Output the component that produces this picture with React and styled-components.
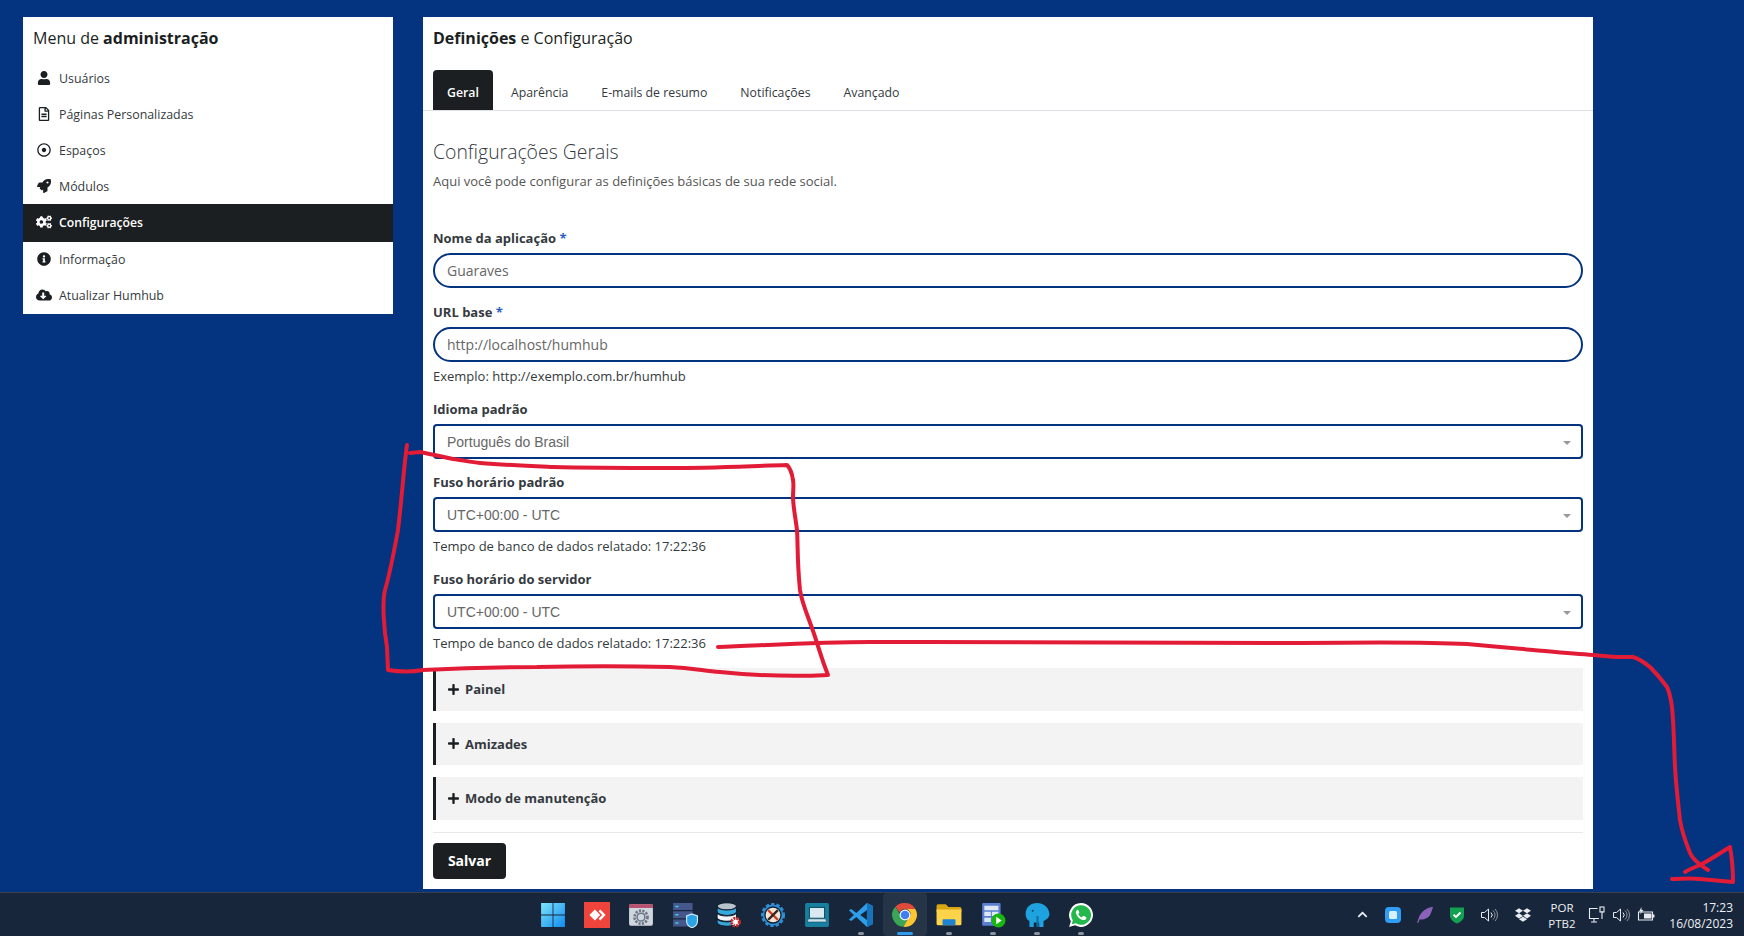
import React from 'react'
import styled, { createGlobalStyle } from 'styled-components'
import {
  FaUser,
  FaRegFileAlt,
  FaRegDotCircle,
  FaRocket,
  FaCogs,
  FaInfoCircle,
  FaCloudDownloadAlt,
  FaPlus,
  FaDropbox,
  FaChevronUp,
} from 'react-icons/fa'

const navy = '#04337f'
const ink = '#1b1f22'
const text = '#343a40'
const sans = '"Open Sans", "Noto Sans", sans-serif'

const GlobalStyle = createGlobalStyle`
  html, body {
    margin: 0;
    height: 100%;
    overflow: hidden;
    background: ${navy};
  }
  * { box-sizing: border-box; }
`

const Page = styled.div`
  position: relative;
  display: flex;
  flex-direction: column;
  width: 1744px;
  height: 936px;
  font-family: ${sans};
  color: ${text};
`

const Content = styled.main`
  flex: 1;
  display: flex;
  align-items: flex-start;
  gap: 30px;
  padding: 17px 0 0 23px;
`

const Sidebar = styled.nav`
  width: 370px;
  height: 297px;
  background: #fff;
`

const PanelTitle = styled.h1`
  margin: 0;
  font-size: 16px;
  font-weight: 400;
  line-height: 23px;
  color: ${ink};
  padding: ${p => (p.$side ? '10px 10px 10px' : '10px 0 0')};

  strong {
    font-weight: 700;
  }
`

const NavItem = styled.a`
  display: flex;
  align-items: center;
  height: ${p => (p.$active ? '38px' : '36px')};
  padding-left: 13px;
  padding-bottom: ${p => (p.$raised ? '2px' : '0')};
  font-size: ${p => (p.$active ? '12.2px' : '12.4px')};
  font-weight: ${p => (p.$active ? 600 : 400)};
  color: ${p => (p.$active ? '#fff' : text)};
  background: ${p => (p.$active ? ink : 'transparent')};

  svg {
    flex: none;
    width: 16px;
    font-size: 14px;
    color: ${p => (p.$active ? '#fff' : ink)};
    margin-right: 7px;
  }
`

const Main = styled.section`
  width: 1170px;
  height: 872px;
  padding: 0 10px;
  background: #fff;
`

const Tabs = styled.div`
  display: flex;
  gap: 3px;
  height: 41px;
  margin: 20px -10px 0;
  padding: 0 10px;
  border-bottom: 1px solid #dee2e6;
`

const Tab = styled.a`
  display: flex;
  align-items: center;
  height: 40px;
  padding: ${p => (p.$active ? '4px 14px 0' : '4px 15px 0')};
  border-radius: 4px 4px 0 0;
  font-size: 12.3px;
  font-weight: ${p => (p.$active ? 600 : 500)};
  color: ${p => (p.$active ? '#fff' : text)};
  background: ${p => (p.$active ? ink : 'transparent')};
`

const SectionTitle = styled.h2`
  margin: 27px 0 0;
  font-size: 19.4px;
  font-weight: 300;
  line-height: 28px;
  color: ${text};
`

const SectionText = styled.p`
  margin: 6px 0 39px;
  font-size: 13px;
  line-height: 18px;
  color: #555;
`

const Field = styled.div`
  margin-bottom: ${p => p.$gap || '15px'};
`

const Label = styled.label`
  display: block;
  height: 18px;
  margin-bottom: 6px;
  font-size: 13px;
  font-weight: 700;
  line-height: 18px;
  color: ${text};

  span {
    color: #2c5cc5;
  }
`

const Input = styled.input`
  display: block;
  width: 100%;
  height: 35px;
  padding: 0 12px;
  border: 2px solid ${navy};
  border-radius: 18px;
  outline: none;
  background: #fff;
  font-family: ${sans};
  font-size: 14px;
  color: #666;
`

const SelectWrap = styled.div`
  position: relative;

  &::after {
    content: '';
    position: absolute;
    top: 17px;
    right: 12px;
    border-left: 4px solid transparent;
    border-right: 4px solid transparent;
    border-top: 4px solid #999;
  }
`

const Select = styled.select`
  display: block;
  width: 100%;
  height: 35px;
  padding: 0 12px;
  border: 2px solid ${navy};
  border-radius: 4px;
  outline: none;
  appearance: none;
  background: #fff;
  font-family: "Liberation Sans", Arial, sans-serif;
  font-size: 14px;
  color: #666;
`

const Help = styled.div`
  margin-top: 5px;
  font-size: 13px;
  line-height: 18px;
  color: ${text};
`

const Accordion = styled.div`
  display: flex;
  align-items: center;
  height: 42.5px;
  margin-bottom: 12px;
  padding-left: 12px;
  border-left: 3px solid ${ink};
  background: #f3f3f3;
  font-size: 13px;
  font-weight: 700;
  color: ${text};

  svg {
    width: 11px;
    margin-right: 6px;
    color: ${ink};
  }
`

const Footer = styled.div`
  padding-top: 10px;
  border-top: 1px solid #e8e8e8;
`

const SaveButton = styled.button`
  width: 73px;
  height: 36px;
  border: none;
  border-radius: 4px;
  background: ${ink};
  font-family: ${sans};
  font-size: 14px;
  font-weight: 700;
  color: #fff;
`

const Taskbar = styled.footer`
  position: relative;
  flex: none;
  height: 44px;
  display: flex;
  align-items: center;
  background: #17263b;
  border-top: 1px solid #38414d;
`

const Pinned = styled.div`
  position: absolute;
  left: 531px;
  top: 0;
  display: flex;
  height: 100%;
`

const PinSlot = styled.div`
  position: relative;
  width: 44px;
  height: 100%;
  display: flex;
  align-items: center;
  justify-content: center;
  padding-top: 1px;
  border-radius: 4px;
  background: ${p => (p.$current ? '#263448' : 'transparent')};

  &::after {
    content: '';
    display: ${p => (p.$open || p.$current ? 'block' : 'none')};
    position: absolute;
    bottom: 1px;
    left: 50%;
    transform: translateX(-50%);
    width: ${p => (p.$current ? '16px' : '6px')};
    height: 3px;
    border-radius: 2px;
    background: ${p => (p.$current ? '#2f9bf0' : '#8b929c')};
  }
`

const Tray = styled.div`
  position: absolute;
  right: 11px;
  top: 0;
  height: 100%;
  display: flex;
  align-items: center;
  color: #e8ebef;
`

const TrayIcon = styled.div`
  width: ${p => p.$w || '32px'};
  display: flex;
  justify-content: center;
  align-items: center;
`

const TrayText = styled.div`
  padding-top: 2px;
  font-size: ${p => p.$size || '11.5px'};
  line-height: 16px;
  text-align: ${p => p.$align || 'center'};
  color: #eef0f3;
  width: ${p => p.$w};
`

const Annotation = styled.svg`
  position: absolute;
  left: 0;
  top: 0;
  width: 1744px;
  height: 936px;
  pointer-events: none;
  fill: none;
  stroke: #e21c36;
  stroke-width: 4;
  stroke-linecap: round;
  stroke-linejoin: round;
`

const Glyph = ({ children }) => (
  <svg width="26" height="26" viewBox="0 0 24 24">
    {children}
  </svg>
)

const WindowsLogo = () => (
  <Glyph>
    <defs>
      <linearGradient id="win" x1="0" y1="0" x2="1" y2="1">
        <stop offset="0" stopColor="#7fe3fb" />
        <stop offset="1" stopColor="#0f8cf0" />
      </linearGradient>
    </defs>
    <path fill="url(#win)" d="M1 1h10.6v10.6H1zM12.4 1H23v10.6H12.4zM1 12.4h10.6V23H1zM12.4 12.4H23V23H12.4z" />
  </Glyph>
)

const AnyDesk = () => (
  <Glyph>
    <rect width="24" height="24" fill="#ef443b" />
    <path fill="#fff" d="M10 7l5 5-5 5-5-5z" />
    <path fill="#fff" d="M15 7l5 5-5 5-1.6-1.6L16.8 12l-3.4-3.4z" />
  </Glyph>
)

const CalendarGear = () => (
  <Glyph>
    <rect x="1" y="2" width="22" height="20" rx="2" fill="#cfd6de" />
    <rect x="1" y="2" width="22" height="3.5" fill="#b8506f" />
    <circle cx="12" cy="14" r="6" fill="none" stroke="#6c7684" strokeWidth="2.4" strokeDasharray="2 1.2" />
    <circle cx="12" cy="14" r="3.6" fill="none" stroke="#6c7684" strokeWidth="1.4" />
  </Glyph>
)

const ServerShield = () => (
  <Glyph>
    <path fill="#46578c" d="M1 1h18v6.4H1zM1 8.6h18V15H1zM1 16.2h18v6.4H1z" />
    <path fill="#35d0e8" d="M3 3.5h3v1.4H3zM3 11h3v1.4H3zM3 18.7h3v1.4H3z" />
    <path fill="#2aa4e6" stroke="#d7eefb" strokeWidth="1" d="M18.5 11l5 1.8v5c0 3-2.4 5-5 6-2.6-1-5-3-5-6v-5z" />
  </Glyph>
)

const DatabaseGear = () => (
  <Glyph>
    <ellipse cx="10" cy="4" rx="9" ry="3.4" fill="#b6c2cc" stroke="#12202f" />
    <path fill="#35a9dc" stroke="#12202f" d="M1 4v5c0 1.9 4 3.4 9 3.4s9-1.5 9-3.4V4c0 1.9-4 3.4-9 3.4S1 5.9 1 4z" />
    <path fill="#f2f5f7" stroke="#12202f" d="M1 9.5v5c0 1.9 4 3.4 9 3.4s9-1.5 9-3.4v-5c0 1.9-4 3.4-9 3.4S1 11.4 1 9.5z" />
    <path fill="#35a9dc" stroke="#12202f" d="M1 15v4c0 1.9 4 3.4 9 3.4s9-1.5 9-3.4v-4c0 1.9-4 3.4-9 3.4S1 16.9 1 15z" />
    <circle cx="18" cy="18.5" r="3.6" fill="#fff" stroke="#c42b2b" strokeWidth="2.8" strokeDasharray="2 .9" />
  </Glyph>
)

const WrenchGear = () => (
  <Glyph>
    <circle cx="12" cy="12" r="9.6" fill="#2f8fd6" stroke="#2f8fd6" strokeWidth="3" strokeDasharray="3 1.8" />
    <circle cx="12" cy="12" r="8" fill="#12202f" />
    <circle cx="12" cy="12" r="6.8" fill="#f1e6d5" />
    <path stroke="#c9432e" strokeWidth="2.2" d="M7.5 7.5l9 9" />
    <path stroke="#33281f" strokeWidth="2.2" d="M16.5 7.5l-9 9" />
  </Glyph>
)

const Monitor = () => (
  <Glyph>
    <rect x="1" y="1" width="22" height="22" rx="1.5" fill="#17809f" />
    <rect x="5" y="5" width="14" height="10" fill="#d9e9ef" stroke="#0c4f66" />
    <path fill="#cfe3ea" stroke="#0c4f66" strokeWidth=".6" d="M4 15.5h16l1 3H3z" />
  </Glyph>
)

const VsCode = () => (
  <Glyph>
    <path fill="#2d9ee8" d="M17.5 1L23 3.7v16.6L17.5 23 7.7 13.9 3 17.5.8 16.4 5.5 12 .8 7.6 3 6.5l4.700 3.600zm0 6.400L11.300 12l6.200 4.600z" />
    <path fill="#1673b8" d="M17.5 1L23 3.7v16.6L17.5 23z" />
  </Glyph>
)

const Chrome = () => (
  <Glyph>
    <path fill="#e04a3b" d="M12 1a11 11 0 0 1 9.530 5.500H12a5.500 5.500 0 0 0-5.030 3.280L3.200 4.300A11 11 0 0 1 12 1z" />
    <path fill="#3aa655" d="M3.200 4.300l4.770 8.270a5.500 5.500 0 0 0 6.400 4.400L10.600 22.900A11 11 0 0 1 3.200 4.300z" />
    <path fill="#fbc62f" d="M21.530 6.500A11 11 0 0 1 10.600 22.900l4.770-8.270A5.500 5.500 0 0 0 16.800 9.300 5.500 5.500 0 0 0 12 6.500z" />
    <circle cx="12" cy="12" r="5" fill="#fff" />
    <circle cx="12" cy="12" r="4" fill="#3f7ff0" />
  </Glyph>
)

const Folder = () => (
  <Glyph>
    <path fill="#d9a514" d="M.5 3.500A1.500 1.500 0 0 1 2 2h7l2.500 2.500H22a1.500 1.500 0 0 1 1.500 1.500v3H.5z" />
    <path fill="#fcd349" d="M.5 7h23v13a1.500 1.500 0 0 1-1.500 1.500H2A1.500 1.500 0 0 1 .5 20z" />
    <rect x="6" y="16" width="12" height="5.5" rx="1" fill="#1e83d2" />
  </Glyph>
)

const TablePlay = () => (
  <Glyph>
    <rect x="2" y="1" width="17" height="21" rx="1" fill="#5b7fd0" />
    <path fill="#dfe7f7" d="M4 3.500h13v4H4zM4 9h6v4H4zM11 9h6v4h-6zM4 14.500h6v4H4z" />
    <circle cx="17" cy="17" r="6.5" fill="#19b60f" />
    <path fill="#fff" d="M15 13.500l5 3.500-5 3.500z" />
  </Glyph>
)

const Elephant = () => (
  <Glyph>
    <path fill="#1fa3e0" d="M12 1C6 1 1.500 5 1.500 11c0 3.400 1.500 5.400 3.500 6.500V23h4v-4h5v4h4v-5.500c3-1.200 5.500-3.800 5.500-6.500C23 5 18 1 12 1z" />
    <path fill="#10719f" d="M11.500 13h2v10h-2z" />
    <circle cx="8" cy="8" r=".9" fill="#0b3d57" />
  </Glyph>
)

const WhatsApp = () => (
  <Glyph>
    <path fill="#fff" d="M12 1a11 11 0 0 0-9.400 16.700L1 23l5.500-1.500A11 11 0 1 0 12 1z" />
    <path fill="#25b84c" d="M12 3a9 9 0 0 0-7.600 13.800L3.500 20.500l3.800-1A9 9 0 1 0 12 3z" />
    <path fill="#fff" d="M9 7.200c-.5 0-1.600.8-1.600 2.500 0 3 3.800 7 7 7 1.700 0 2.500-1.100 2.500-1.800 0-.5-.1-.8-.4-1l-2-1c-.4-.2-.7 0-.9.300l-.6.700c-.2.200-.5.300-.8.100-1-.5-2-1.400-2.600-2.500-.1-.3 0-.5.200-.7l.5-.6c.2-.3.200-.5.100-.8l-.8-1.900c-.2-.3-.4-.3-.6-.3z" />
  </Glyph>
)

const TrayGlyph = ({ children, w = 18 }) => (
  <svg width={w} height="18" viewBox={`0 0 ${w} 18`} fill="none">
    {children}
  </svg>
)

const Speaker = () => (
  <TrayGlyph w={18}>
    <path stroke="#e8ebef" strokeWidth="1" d="M1.500 6.500h3l4-3.500v12l-4-3.500h-3z" />
    <path stroke="#e8ebef" strokeWidth="1" d="M11 6.500a3.500 3.500 0 0 1 0 5" />
    <path stroke="#8e959f" strokeWidth="1" d="M13 4.500a6 6 0 0 1 0 9M15 3a8.500 8.500 0 0 1 0 12" />
  </TrayGlyph>
)

const pinned = [
  { id: 'start', icon: <WindowsLogo /> },
  { id: 'anydesk', icon: <AnyDesk /> },
  { id: 'calendar', icon: <CalendarGear /> },
  { id: 'server', icon: <ServerShield /> },
  { id: 'database', icon: <DatabaseGear /> },
  { id: 'wrench', icon: <WrenchGear /> },
  { id: 'monitor', icon: <Monitor /> },
  { id: 'vscode', icon: <VsCode />, open: true },
  { id: 'chrome', icon: <Chrome />, current: true },
  { id: 'folder', icon: <Folder />, open: true },
  { id: 'table', icon: <TablePlay />, open: true },
  { id: 'elephant', icon: <Elephant />, open: true },
  { id: 'whatsapp', icon: <WhatsApp />, open: true },
]

const navItems = [
  { label: 'Usuários', icon: <FaUser /> },
  { label: 'Páginas Personalizadas', icon: <FaRegFileAlt /> },
  { label: 'Espaços', icon: <FaRegDotCircle /> },
  { label: 'Módulos', icon: <FaRocket /> },
  { label: 'Configurações', icon: <FaCogs />, active: true, raised: true },
  { label: 'Informação', icon: <FaInfoCircle />, raised: true },
  { label: 'Atualizar Humhub', icon: <FaCloudDownloadAlt />, raised: true },
]

const tabs = ['Geral', 'Aparência', 'E-mails de resumo', 'Notificações', 'Avançado']
const sections = ['Painel', 'Amizades', 'Modo de manutenção']

export default function App() {
  return (
    <Page>
      <GlobalStyle />
      <Content>
        <Sidebar>
          <PanelTitle $side>
            Menu de <strong>administração</strong>
          </PanelTitle>
          {navItems.map(item => (
            <NavItem key={item.label} $active={item.active} $raised={item.raised}>
              {item.icon}
              {item.label}
            </NavItem>
          ))}
        </Sidebar>

        <Main>
          <PanelTitle>
            <strong>Definições</strong> e Configuração
          </PanelTitle>
          <Tabs>
            {tabs.map((tab, i) => (
              <Tab key={tab} $active={i === 0}>
                {tab}
              </Tab>
            ))}
          </Tabs>

          <SectionTitle>Configurações Gerais</SectionTitle>
          <SectionText>Aqui você pode configurar as definições básicas de sua rede social.</SectionText>

          <Field $gap="15px">
            <Label>
              Nome da aplicação <span>*</span>
            </Label>
            <Input defaultValue="Guaraves" />
          </Field>
          <Field $gap="15px">
            <Label>
              URL base <span>*</span>
            </Label>
            <Input defaultValue="http://localhost/humhub" />
            <Help>Exemplo: http://exemplo.com.br/humhub</Help>
          </Field>
          <Field $gap="14px">
            <Label>Idioma padrão</Label>
            <SelectWrap>
              <Select defaultValue="pt">
                <option value="pt">Português do Brasil</option>
              </Select>
            </SelectWrap>
          </Field>
          <Field $gap="15px">
            <Label>Fuso horário padrão</Label>
            <SelectWrap>
              <Select defaultValue="utc">
                <option value="utc">UTC+00:00 - UTC</option>
              </Select>
            </SelectWrap>
            <Help>Tempo de banco de dados relatado: 17:22:36</Help>
          </Field>
          <Field $gap="16px">
            <Label>Fuso horário do servidor</Label>
            <SelectWrap>
              <Select defaultValue="utc">
                <option value="utc">UTC+00:00 - UTC</option>
              </Select>
            </SelectWrap>
            <Help>Tempo de banco de dados relatado: 17:22:36</Help>
          </Field>

          {sections.map(name => (
            <Accordion key={name}>
              <FaPlus />
              {name}
            </Accordion>
          ))}

          <Footer>
            <SaveButton>Salvar</SaveButton>
          </Footer>
        </Main>
      </Content>

      <Taskbar>
        <Pinned>
          {pinned.map(app => (
            <PinSlot key={app.id} $open={app.open} $current={app.current}>
              {app.icon}
            </PinSlot>
          ))}
        </Pinned>
        <Tray>
          <TrayIcon $w="30px">
            <FaChevronUp size={11} />
          </TrayIcon>
          <TrayIcon>
            <svg width="16" height="16" viewBox="0 0 16 16">
              <rect width="16" height="16" rx="4" fill="#2f9cf5" />
              <rect x="4" y="4" width="8" height="8" rx="1.5" fill="#d7f0ff" />
            </svg>
          </TrayIcon>
          <TrayIcon>
            <svg width="18" height="18" viewBox="0 0 18 18">
              <path fill="#8a63b8" d="M17 1C10 1.500 4.500 6 2.500 12.500L1 17l1.500-.5 1-3c4 .5 9-1 11-5.500 1-2.500 2-5 2.500-7z" />
            </svg>
          </TrayIcon>
          <TrayIcon>
            <svg width="16" height="18" viewBox="0 0 16 18">
              <path fill="#12a150" d="M1 1.500h14V10c0 3.500-3.500 6-7 7.500C4.500 16 1 13.500 1 10z" />
              <path fill="none" stroke="#fff" strokeWidth="1.8" d="M4.500 8.800L7 11l4.500-4.500" />
            </svg>
          </TrayIcon>
          <TrayIcon>
            <Speaker />
          </TrayIcon>
          <TrayIcon $w="36px">
            <FaDropbox size={16} />
          </TrayIcon>
          <TrayText $w="42px">
            POR
            <br />
            PTB2
          </TrayText>
          <TrayIcon $w="28px">
            <TrayGlyph w={18}>
              <path stroke="#e8ebef" strokeWidth="1.1" d="M11 12.500H1.500v-10h8M6 12.500v3M3 16h6M14 5v8" />
              <rect x="12" y="1" width="4" height="5" stroke="#e8ebef" strokeWidth="1.1" />
            </TrayGlyph>
          </TrayIcon>
          <TrayIcon $w="20px">
            <Speaker />
          </TrayIcon>
          <TrayIcon $w="30px">
            <TrayGlyph w={18}>
              <path stroke="#e8ebef" strokeWidth="1.1" d="M1.500 6h14v8h-14z" />
              <path fill="#e8ebef" d="M7 7.500h7.500v5H7zM16 8.500h1.500v3H16zM4.500 1L2 5.500h2l-1 3L6.500 4h-2z" />
            </TrayGlyph>
          </TrayIcon>
          <TrayText $w="72px" $align="right" $size="12px">
            17:23
            <br />
            16/08/2023
          </TrayText>
        </Tray>
      </Taskbar>

      <Annotation viewBox="0 0 1744 936">
        <path d="M407 445C404 465 402 497 398 530C394 552 390 573 385 590C382 603 384 630 387 647L388 670C400 672 412 672 423 670C460 668 500 667 537 667C580 666 630 666 670 667C690 668 700 670 720 672C750 675 790 677 828 675C822 660 820 652 817 643C810 620 802 605 800 590C797 560 798 545 797 530C795 515 793 505 793 497C793 490 794 485 793 480C792 473 790 468 787 465C750 466 710 468 670 468C630 468 590 468 553 467C530 466 505 465 480 463C470 462 462 460 453 459C440 456 430 454 420 452L410 453" />
        <path d="M718 647C770 645 820 642 870 642C1000 642 1120 643 1300 643C1380 642 1430 642 1467 644C1490 646 1510 648 1533 650C1555 652 1575 654 1593 655C1605 656 1612 657 1617 657C1622 657 1628 657 1633 657C1640 659 1645 663 1650 667C1656 673 1662 680 1667 687C1670 693 1671 700 1672 707C1674 727 1674 747 1675 767C1676 785 1678 802 1680 820C1682 832 1686 843 1690 853C1693 860 1700 865 1708 870" />
        <path d="M1685 872C1690 869 1695 867 1700 865C1710 860 1720 853 1730 847C1732 858 1733 870 1733 882C1722 881 1711 880 1700 879C1690 878 1681 879 1672 879" />
      </Annotation>
    </Page>
  )
}
